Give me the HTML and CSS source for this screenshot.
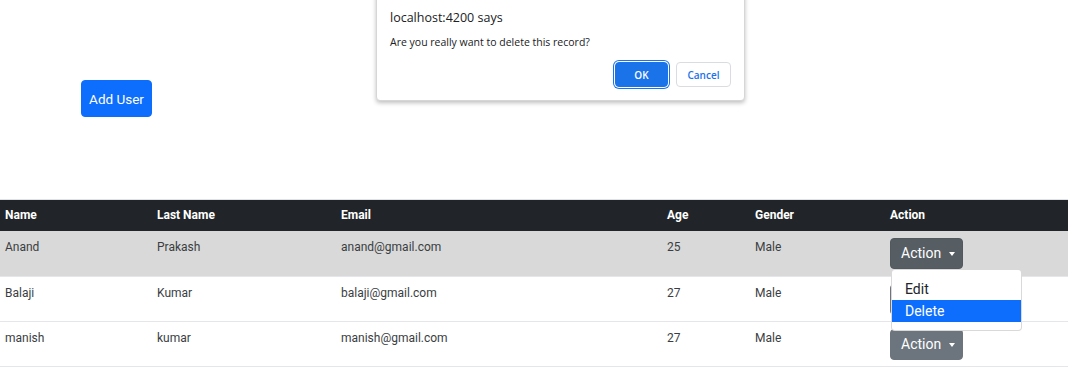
FILE: index.html
```html
<!DOCTYPE html>
<html>
<head>
<meta charset="utf-8">
<link rel="stylesheet" href="styles.css">
</head>
<body>
<div class="toolbar">
  <button class="btn btn-primary">Add User</button>
</div>
<table class="users">
  <colgroup>
    <col class="c-name"><col class="c-last"><col class="c-email"><col class="c-age"><col class="c-gender"><col>
  </colgroup>
  <thead>
    <tr><th>Name</th><th>Last Name</th><th>Email</th><th>Age</th><th>Gender</th><th>Action</th></tr>
  </thead>
  <tbody>
    <tr class="hover">
      <td>Anand</td><td>Prakash</td><td>anand@gmail.com</td><td>25</td><td>Male</td>
      <td class="act">
        <div class="dropdown">
          <button class="btn btn-secondary active">Action <span class="caret"></span></button>
          <ul class="menu">
            <li>Edit</li>
            <li class="sel">Delete</li>
          </ul>
        </div>
      </td>
    </tr>
    <tr>
      <td>Balaji</td><td>Kumar</td><td>balaji@gmail.com</td><td>27</td><td>Male</td>
      <td class="act"><button class="btn btn-secondary">Action <span class="caret"></span></button></td>
    </tr>
    <tr>
      <td>manish</td><td>kumar</td><td>manish@gmail.com</td><td>27</td><td>Male</td>
      <td class="act"><button class="btn btn-secondary">Action <span class="caret"></span></button></td>
    </tr>
  </tbody>
</table>

<div class="dialog">
  <div class="d-title">localhost:4200 says</div>
  <div class="d-msg">Are you really want to delete this record?</div>
  <div class="d-actions">
    <button class="d-btn d-ok">OK</button>
    <button class="d-btn d-cancel">Cancel</button>
  </div>
</div>
</body>
</html>
```
FILE: styles.css
```css
* { box-sizing: border-box; }
html, body { margin: 0; padding: 0; background: #fff; }
body { font-family: Roboto, "Liberation Sans", sans-serif; color: #212529; width: 1068px; height: 369px; overflow: hidden; position: relative; }

.toolbar { padding: 80px 0 0 81px; height: 199px; }

.btn {
  font-family: Roboto, "Liberation Sans", sans-serif;
  font-size: 14px;
  line-height: 21px;
  border: 1px solid transparent;
  border-radius: 4px;
  color: #fff;
  cursor: pointer;
  white-space: nowrap;
}
.btn-primary { background: #0d6efd; border-color: #0d6efd; padding: 1px 0 0; width: 71px; height: 37px; display: inline-flex; align-items: center; justify-content: center; font-size: 13.5px; }
.btn-secondary { background: #6c757d; border-color: #6c757d; padding: 4px 10px; width: 73px; height: 31px; display: flex; align-items: center; gap: 8px; }
.btn-secondary.active { background: #565e64; border-color: #51585e; }
.caret { display: inline-block; width: 0; height: 0; border-left: 3.5px solid transparent; border-right: 3.5px solid transparent; border-top: 4px solid #fff; margin-top: 1px; }

.users { width: 100%; border-collapse: collapse; table-layout: fixed; font-size: 12px; border-top: 1px solid #dee2e6; }
.c-name { width: 152px; }
.c-last { width: 184px; }
.c-email { width: 326px; }
.c-age { width: 88px; }
.c-gender { width: 135px; }
.users th { background: #212529; color: #fff; font-weight: 700; text-align: left; padding: 6px 5px 7px; line-height: 18px; height: 31px; }
.users td { padding: 7px 5px 6px; line-height: 18px; vertical-align: top; height: 45px; border-bottom: 1px solid #e4e6ea; color: #3a3e42; }
.users td.act { padding: 7px 5px 6px; }
.users tr.hover td { background: #d9d9d9; }

.dropdown { position: relative; }
.menu { position: absolute; left: 1px; top: 31px; width: 131px; margin: 0; padding: 8px 0; list-style: none; background: #fff; border: 1px solid rgba(0,0,0,.15); border-radius: 4px; z-index: 5; }
.menu li { font-size: 14px; line-height: 22px; padding: 0 13px; color: #212529; }
.menu li.sel { background: #0d6efd; color: #fff; }

.dialog { position: absolute; left: 376px; top: -8px; width: 369px; height: 109px; background: #fff; border: 1px solid #d6d6d6; border-radius: 0 0 4px 4px; box-shadow: 0 2px 4px rgba(0,0,0,.25); font-family: "Open Sans", "Noto Sans", sans-serif; z-index: 10; padding: 16px 13px 0; }
.d-title { font-size: 12.5px; color: #202124; line-height: 18px; }
.d-msg { font-size: 10.5px; color: #202124; line-height: 16px; margin-top: 7px; }
.d-actions { display: flex; justify-content: flex-end; gap: 8px; margin-top: 12px; padding-right: 0; }
.d-btn { font-family: "Open Sans", "Noto Sans", sans-serif; font-size: 10px; font-weight: 600; height: 25px; border-radius: 4px; cursor: pointer; }
.d-ok { width: 53px; background: #1a73e8; color: #fff; border: 1px solid #1a73e8; box-shadow: 0 0 0 1px #fff, 0 0 0 2px #1a73e8; }
.d-cancel { width: 55px; background: #fff; color: #1a73e8; border: 1px solid #dadce0; }
```
